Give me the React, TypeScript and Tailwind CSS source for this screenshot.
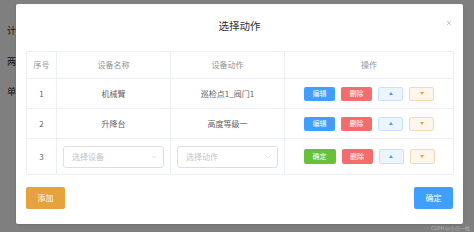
import { ChevronDown, X } from 'lucide-react'

const FONT = { fontFamily: '"Noto Sans CJK SC", "Noto Sans", sans-serif' }

const ROWS = [
  { no: 1, device: '机械臂', action: '巡检点1_阀门1' },
  { no: 2, device: '升降台', action: '高度等级一' },
]

function Caret({ up, color }: { up: boolean; color: string }) {
  return (
    <svg width="4" height="3" viewBox="0 0 4 3">
      <path d={up ? 'M2 0 L4 3 L0 3 Z' : 'M0 0 L4 0 L2 3 Z'} fill={color} />
    </svg>
  )
}

function OpButtons({ editing }: { editing?: boolean }) {
  const h = editing ? 'h-[15px]' : 'h-[14px]'
  return (
    <div className="flex items-center justify-center gap-[6px]">
      {editing ? (
        <button className="w-[32px] h-[15px] rounded-[2px] bg-[#67c23a] text-white text-[7px] leading-none">确定</button>
      ) : (
        <button className="w-[31px] h-[14px] rounded-[2px] bg-[#409eff] text-white text-[7px] leading-none">编辑</button>
      )}
      <button className={`w-[31px] ${h} rounded-[2px] bg-[#f56c6c] text-white text-[7px] leading-none`}>删除</button>
      <button className={`w-[25px] ${h} rounded-[2px] bg-[#ecf5ff] border border-[#c6e2ff] flex items-center justify-center`}>
        <Caret up color="#409eff" />
      </button>
      <button className={`w-[25px] ${h} rounded-[2px] bg-[#fdf6ec] border border-[#f5dab1] flex items-center justify-center`}>
        <Caret up={false} color="#e6a23c" />
      </button>
    </div>
  )
}

function Select({ placeholder }: { placeholder: string }) {
  return (
    <div className="h-[22px] mx-[6px] rounded-[3px] border border-[#dcdfe6] bg-white flex items-center justify-between pl-[8px] pr-[5px]">
      <span className="text-[8px] text-[#c0c4cc]">{placeholder}</span>
      <ChevronDown size={8} strokeWidth={1.5} color="#c0c4cc" />
    </div>
  )
}

export default function App() {
  return (
    <div className="relative w-[474px] h-[232px] overflow-hidden bg-white" style={FONT}>
      {/* page behind the dialog, only its left edge shows */}
      <div className="w-[16px] overflow-hidden whitespace-nowrap flex flex-col gap-[17px] pt-[24px] pl-[7px] text-[9px] text-[#303133]">
        <div>计</div>
        <div>两</div>
        <div>单</div>
      </div>

      {/* overlay */}
      <div className="absolute inset-0 bg-[#000000]/50" />
      <div className="absolute right-[4px] bottom-[1px] text-[5px] text-[#b0b0b0]">CSDN @小白一枚</div>

      {/* dialog */}
      <div className="absolute left-[16px] top-[4px] w-[447px] h-[220px] bg-white rounded-[2px] shadow-sm flex flex-col px-[10px]">
        <div className="relative h-[47px] flex items-center justify-center pb-[3px]">
          <span className="text-[10.5px] text-[#303133]">选择动作</span>
          <X size={8} strokeWidth={1.5} color="#909399" className="absolute right-[0px] top-[15px]" />
        </div>

        <table className="w-[427px] border-collapse table-fixed text-[8px] text-[#606266]">
          <colgroup>
            <col className="w-[30px]" />
            <col className="w-[114px]" />
            <col className="w-[114px]" />
            <col className="w-[169px]" />
          </colgroup>
          <thead>
            <tr className="h-[27px] text-[#909399]">
              <th className="border border-[#ebeef5] font-normal">序号</th>
              <th className="border border-[#ebeef5] font-normal">设备名称</th>
              <th className="border border-[#ebeef5] font-normal">设备动作</th>
              <th className="border border-[#ebeef5] font-normal">操作</th>
            </tr>
          </thead>
          <tbody>
            {ROWS.map((row) => (
              <tr key={row.no} className="h-[30px]">
                <td className="border border-[#ebeef5] text-center">{row.no}</td>
                <td className="border border-[#ebeef5] text-center">{row.device}</td>
                <td className="border border-[#ebeef5] text-center">{row.action}</td>
                <td className="border border-[#ebeef5]">
                  <OpButtons />
                </td>
              </tr>
            ))}
            <tr className="h-[36px]">
              <td className="border border-[#ebeef5] text-center">3</td>
              <td className="border border-[#ebeef5]">
                <Select placeholder="选择设备" />
              </td>
              <td className="border border-[#ebeef5]">
                <Select placeholder="选择动作" />
              </td>
              <td className="border border-[#ebeef5]">
                <OpButtons editing />
              </td>
            </tr>
          </tbody>
        </table>

        <div className="flex justify-between mt-[12px]">
          <button className="w-[39px] h-[22px] rounded-[2px] bg-[#e6a23c] text-white text-[8px]">添加</button>
          <button className="w-[39px] h-[22px] rounded-[2px] bg-[#409eff] text-white text-[8px]">确定</button>
        </div>
      </div>
    </div>
  )
}
